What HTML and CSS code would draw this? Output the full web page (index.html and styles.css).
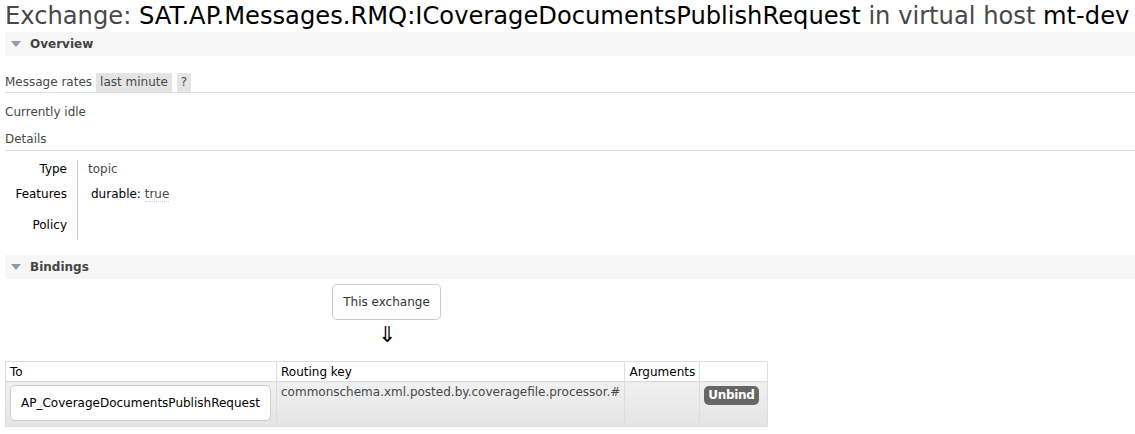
FILE: index.html
```html
<!DOCTYPE html>
<html>
<head>
<meta charset="utf-8">
<link rel="stylesheet" href="styles.css">
</head>
<body>
<h1 class="title">Exchange: <b>SAT.AP.Messages.RMQ:ICoverageDocumentsPublishRequest</b> in virtual host <b>mt-dev</b></h1>

<div class="section">
  <h2 class="section-head"><span class="tri"></span>Overview</h2>
  <div class="section-body">
    <div class="rates-row">
      <span class="rates-label">Message rates</span>
      <span class="chip">last minute</span>
      <span class="chip">?</span>
    </div>
    <p class="idle">Currently idle</p>
    <h3 class="sub">Details</h3>
    <table class="facts">
      <tr class="r1"><th>Type</th><td>topic</td></tr>
      <tr class="r2"><th>Features</th><td><span class="feat">durable: <abbr>true</abbr></span></td></tr>
      <tr class="r3"><th>Policy</th><td></td></tr>
    </table>
  </div>
</div>

<div class="section">
  <h2 class="section-head"><span class="tri"></span>Bindings</h2>
  <div class="bindings">
    <div class="source-wrap">
      <span class="node">This exchange</span>
      <div class="arrow">⇓</div>
    </div>
    <table class="list">
      <thead>
        <tr><th class="c1">To</th><th class="c2">Routing key</th><th class="c3">Arguments</th><th class="c4"></th></tr>
      </thead>
      <tbody>
        <tr>
          <td class="c1"><span class="node wide">AP_CoverageDocumentsPublishRequest</span></td>
          <td class="c2">commonschema.xml.posted.by.coveragefile.processor.#</td>
          <td class="c3"></td>
          <td class="c4"><span class="btn">Unbind</span></td>
        </tr>
      </tbody>
    </table>
  </div>
</div>
</body>
</html>
```

FILE: styles.css
```css
html, body {
  margin: 0;
  padding: 0;
  background: #fff;
}
body {
  font-family: "DejaVu Sans", Verdana, sans-serif;
  font-size: 12px;
  color: #484848;
  padding-left: 5px;
}
.title {
  margin: 0;
  font-weight: normal;
  font-size: 24.2px;
  line-height: 32px;
  height: 32px;
  color: #484848;
  white-space: nowrap;
}
.title b {
  font-weight: normal;
  color: #000;
}
.section-head {
  margin: 0;
  background: #f6f6f6;
  height: 24px;
  line-height: 24px;
  font-size: 12px;
  font-weight: bold;
  color: #444;
  display: flex;
  align-items: center;
}
.tri {
  width: 0;
  height: 0;
  border-left: 5px solid transparent;
  border-right: 5px solid transparent;
  border-top: 6px solid #999;
  margin: 0 9px 0 6px;
}
.section-body {
  padding-top: 17px;
}
.rates-row {
  display: flex;
  align-items: stretch;
  height: 19px;
  line-height: 19px;
  border-bottom: 1px solid #ddd;
}
.rates-label {
  padding-right: 4px;
}
.chip {
  background: #e4e4e4;
  padding: 0 4px;
  margin-right: 5px;
}
.idle {
  margin: 11px 0 0;
  line-height: 16px;
}
.sub {
  margin: 11px 0 0;
  font-size: 12px;
  font-weight: normal;
  line-height: 16px;
  padding-bottom: 3px;
  border-bottom: 1px solid #ddd;
}
.facts {
  border-collapse: collapse;
  margin: 9px 0 0;
}
.facts th {
  text-align: right;
  font-weight: normal;
  color: #000;
  width: 62px;
  padding: 0 10px 0 0;
  border-right: 1px solid #ccc;
  vertical-align: middle;
}
.facts td {
  padding: 0 0 0 10px;
  vertical-align: middle;
}
.facts .r1 th, .facts .r1 td { height: 18px; }
.facts .r2 th, .facts .r2 td { height: 32px; }
.facts .r3 th, .facts .r3 td { height: 30px; }
.feat {
  padding-left: 3px;
  color: #000;
}
.feat abbr {
  color: #484848;
  text-decoration: none;
  border-bottom: 1px dotted #ccc;
}
.section + .section {
  margin-top: 15px;
}
.bindings {
  width: 763px;
}
.source-wrap {
  text-align: center;
  padding-top: 5px;
}
.node {
  display: inline-block;
  border: 1px solid #ccc;
  border-radius: 5px;
  background: #fff;
  padding: 0 10px;
  height: 34px;
  line-height: 34px;
  color: #333;
}
.arrow {
  font-size: 22px;
  line-height: 22px;
  color: #000;
  height: 22px;
  margin-top: 4px;
  font-weight: 300;
}
.list {
  margin-top: 15px;
  width: 763px;
  border-collapse: collapse;
  border: 1px solid #ddd;
}
.list th {
  text-align: left;
  font-weight: normal;
  color: #000;
  background: #fff;
  height: 19px;
  padding: 0 4px;
  border: 1px solid #ddd;
}
.list td {
  background: linear-gradient(#f0f0f0, #e4e4e4);
  border: 1px solid #ddd;
  vertical-align: top;
  padding: 3px 4px;
  height: 38px;
  color: #484848;
}
.list .c1 { width: 262px; }
.list .c2 { width: 339px; }
.list .c3 { width: 65px; }
.node.wide {
  color: #000;
}
.btn {
  display: inline-block;
  background: #666;
  color: #fff;
  font-weight: bold;
  border-radius: 5px;
  padding: 0 4px;
  height: 19px;
  line-height: 19px;
  letter-spacing: -0.3px;
  margin-top: 1px;
}
```
